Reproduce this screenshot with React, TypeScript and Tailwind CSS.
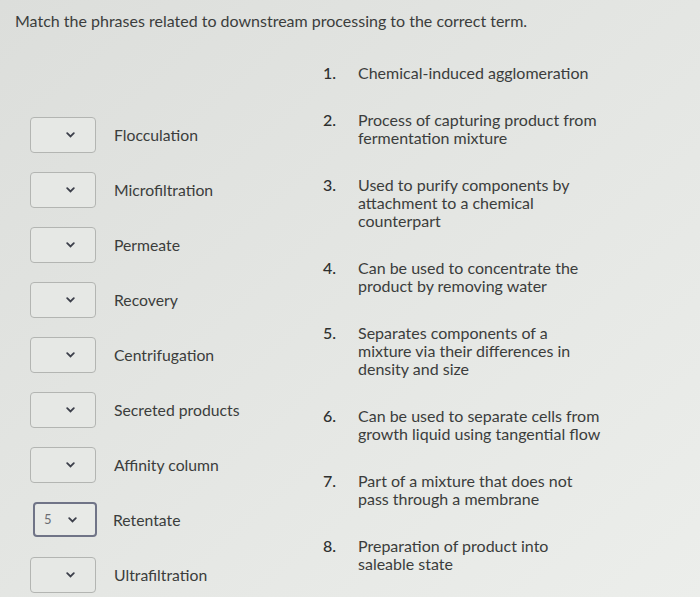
const terms = [
  { label: "Flocculation", value: "" },
  { label: "Microfiltration", value: "" },
  { label: "Permeate", value: "" },
  { label: "Recovery", value: "" },
  { label: "Centrifugation", value: "" },
  { label: "Secreted products", value: "" },
  { label: "Affinity column", value: "" },
  { label: "Retentate", value: "5" },
  { label: "Ultrafiltration", value: "" },
];

const phrases = [
  ["Chemical-induced agglomeration"],
  ["Process of capturing product from", "fermentation mixture"],
  ["Used to purify components by", "attachment to a chemical", "counterpart"],
  ["Can be used to concentrate the", "product by removing water"],
  ["Separates components of a", "mixture via their differences in", "density and size"],
  ["Can be used to separate cells from", "growth liquid using tangential flow"],
  ["Part of a mixture that does not", "pass through a membrane"],
  ["Preparation of product into", "saleable state"],
];

function Chevron() {
  return (
    <svg width="9" height="6" viewBox="0 0 9 6" className="text-[#3c3f4a]">
      <path d="M1.2 1.2 L4.5 4.4 L7.8 1.2" fill="none" stroke="currentColor" strokeWidth="1.8" strokeLinecap="round" />
    </svg>
  );
}

export default function App() {
  return (
    <div className="h-[597px] w-[700px] overflow-hidden bg-gradient-to-br from-[#dcdedb] via-[#e4e6e3] to-[#eceeeb] font-['Lato','Noto_Sans',sans-serif] text-[#3b3d3c]">
      <div className="px-[15px] pt-[11px] text-[16px] leading-5">
        Match the phrases related to downstream processing to the correct term.
      </div>

      <div className="flex">
        <div className="ml-[30px] mt-[86px] flex w-[290px] flex-col">
          {terms.map((t) => (
            <div key={t.label} className="flex h-[55px] items-start">
              <div
                className={
                  t.value
                    ? "ml-[3px] flex h-[35px] w-[64px] items-center justify-between rounded-[4px] border-2 border-[#707487] bg-[#e8eae7] pl-[9px] pr-[18px]"
                    : "flex h-[36px] w-[66px] items-center justify-end rounded-[4px] border border-[#b3b5b2] bg-[#e6e8e5] pr-[20px]"
                }
              >
                {t.value ? <span className="text-[13px] text-[#6b6d72]">{t.value}</span> : null}
                <Chevron />
              </div>
              <div className={(t.value ? "ml-[16px]" : "ml-[18px]") + " mt-[8px] text-[15.75px] leading-5"}>{t.label}</div>
            </div>
          ))}
        </div>

        <div className="mt-[33px] flex flex-col gap-[29px]">
          {phrases.map((lines, i) => (
            <div key={i} className="flex text-[16px] leading-[18px]">
              <div className="w-[38px] pl-[3px] font-medium text-[#2e302f]">{i + 1}.</div>
              <div>
                {lines.map((l) => (
                  <div key={l}>{l}</div>
                ))}
              </div>
            </div>
          ))}
        </div>
      </div>
    </div>
  );
}
